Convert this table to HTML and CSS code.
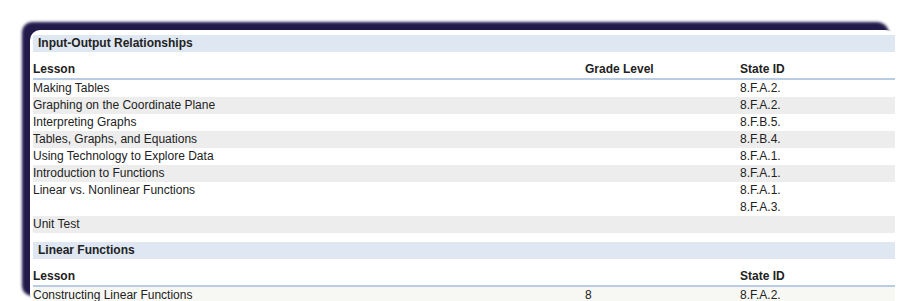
FILE: index.html
```html
<!DOCTYPE html>
<html>
<head>
<meta charset="utf-8">
<link rel="stylesheet" href="styles.css">
</head>
<body>
<div class="card">
  <section class="group">
    <div class="group-title">Input-Output Relationships</div>
    <table class="lessons">
      <colgroup><col class="c-lesson"><col class="c-grade"><col class="c-state"></colgroup>
      <thead>
        <tr><th>Lesson</th><th>Grade Level</th><th>State ID</th></tr>
      </thead>
      <tbody>
        <tr><td>Making Tables</td><td></td><td>8.F.A.2.</td></tr>
        <tr><td>Graphing on the Coordinate Plane</td><td></td><td>8.F.A.2.</td></tr>
        <tr><td>Interpreting Graphs</td><td></td><td>8.F.B.5.</td></tr>
        <tr><td>Tables, Graphs, and Equations</td><td></td><td>8.F.B.4.</td></tr>
        <tr><td>Using Technology to Explore Data</td><td></td><td>8.F.A.1.</td></tr>
        <tr><td>Introduction to Functions</td><td></td><td>8.F.A.1.</td></tr>
        <tr><td>Linear vs. Nonlinear Functions</td><td></td><td>8.F.A.1.<br>8.F.A.3.</td></tr>
        <tr><td>Unit Test</td><td></td><td></td></tr>
      </tbody>
    </table>
  </section>
  <section class="group">
    <div class="group-title">Linear Functions</div>
    <table class="lessons">
      <colgroup><col class="c-lesson"><col class="c-grade"><col class="c-state"></colgroup>
      <thead>
        <tr><th>Lesson</th><th></th><th>State ID</th></tr>
      </thead>
      <tbody>
        <tr class="hl"><td>Constructing Linear Functions</td><td>8</td><td>8.F.A.2.</td></tr>
      </tbody>
    </table>
  </section>
</div>
</body>
</html>
```

FILE: styles.css
```css
html, body {
  margin: 0;
  padding: 0;
  background: #ffffff;
  overflow: hidden;
}
body {
  font-family: "Liberation Sans", Arial, sans-serif;
  font-size: 12px;
  color: #222222;
}
.card {
  margin: 30px 0 0 30px;
  padding: 5px 2px 0 3px;
  background: #ffffff;
  border-radius: 10px 12px 0 10px;
  box-shadow: -8px -8px 3px #221a4b;
}
.group + .group {
  margin-top: 9px;
}
.group-title {
  height: 17px;
  line-height: 17px;
  padding-left: 5px;
  background: #dfe8f2;
  font-weight: bold;
  color: #222222;
  margin-bottom: 9px;
}
.lessons {
  width: 100%;
  border-collapse: collapse;
  table-layout: fixed;
}
.c-lesson { width: 552px; }
.c-grade { width: 155px; }
.c-state { width: 155px; }
.lessons th {
  text-align: left;
  font-weight: bold;
  height: 17px;
  line-height: 17px;
  padding: 0;
  border-bottom: 2px solid #b8cde4;
}
.lessons td {
  padding: 0;
  line-height: 17px;
  vertical-align: top;
}
.lessons tbody tr:nth-child(even) td {
  background: #ededed;
}
.lessons tbody tr.hl td {
  background: #f7f7f3;
}
```
